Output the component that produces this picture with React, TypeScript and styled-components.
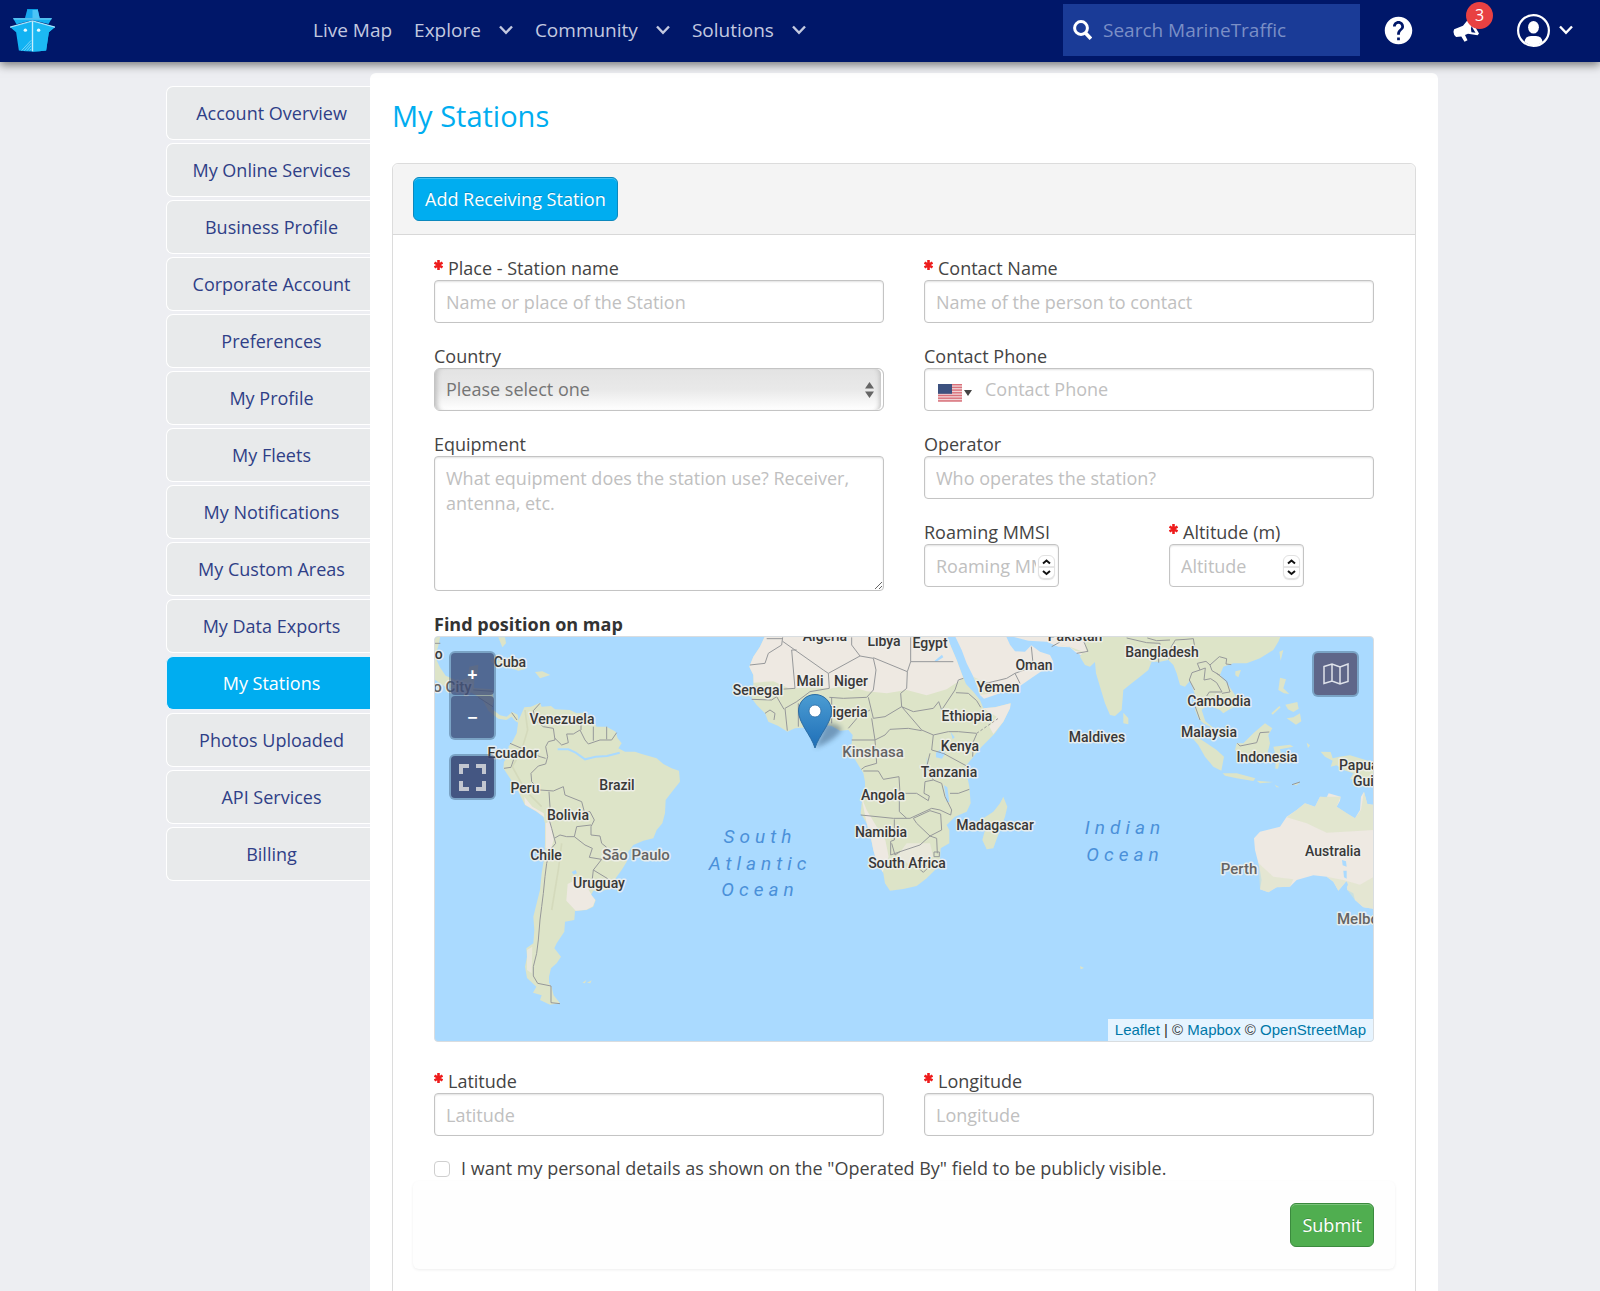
import React from "react";
import styled, { createGlobalStyle, css } from "styled-components";
import { MdHelp } from "react-icons/md";

const GlobalStyle = createGlobalStyle`
  *, *::before, *::after { box-sizing: border-box; }
  body {
    margin: 0;
    background: #edeef2;
    color: #444;
    font: 18px/25px "Open Sans", "Noto Sans", sans-serif;
  }
  button, input, select, textarea { font: inherit; margin: 0; }
`;

/* ---------- top bar ---------- */

const TopBar = styled.header`
  position: relative;
  z-index: 1;
  display: flex;
  align-items: center;
  height: 62px;
  padding: 0 26px 2px 10px;
  background: #001769;
  box-shadow: 0 3px 9px rgba(0, 0, 0, 0.5);
`;

const LogoLink = styled.a`
  display: flex;
  width: 46px;
  margin-right: 257px;
`;

const Nav = styled.nav`
  display: flex;
  gap: 22px;
  margin-right: auto;
  font-size: 19px;
`;

const NavLink = styled.a`
  color: #c3c9e0;
  text-decoration: none;
`;

const NavButton = styled.button`
  display: flex;
  align-items: center;
  gap: 18px;
  padding: 0;
  border: 0;
  background: none;
  color: #c3c9e0;
`;

const Search = styled.label`
  display: flex;
  align-items: center;
  gap: 11px;
  width: 297px;
  height: 52px;
  padding: 0 10px;
  background: #1a3b97;
  color: #fff;
`;

const SearchInput = styled.input`
  flex: 1;
  min-width: 0;
  padding: 0;
  border: 0;
  outline: 0;
  background: none;
  color: #fff;
  font-size: 19px;
  &::placeholder { color: #7b8fc6; opacity: 1; }
`;

const BarButton = styled.button<{ $gap: number }>`
  position: relative;
  display: flex;
  align-items: center;
  gap: 8px;
  margin-left: ${(p) => p.$gap}px;
  padding: 0;
  border: 0;
  background: none;
  color: #fff;
`;

const Badge = styled.span`
  position: absolute;
  top: -17px;
  right: -14px;
  width: 27px;
  height: 27px;
  border-radius: 50%;
  background: #e84142;
  font-size: 16px;
  line-height: 27px;
  text-align: center;
`;

/* ---------- page frame ---------- */

const Page = styled.div`
  display: flex;
  align-items: flex-start;
  max-width: 1276px;
  margin: 11px auto 0;
  padding-left: 4px;
`;

const SideNav = styled.nav`
  display: flex;
  flex-direction: column;
  gap: 3px;
  flex: 0 0 204px;
  padding-top: 13px;
`;

const SideLink = styled.a<{ $active?: boolean }>`
  height: 54px;
  padding-left: 6px;
  border: 1px solid #fff;
  border-right: 0;
  border-radius: 7px 0 0 7px;
  background: #e8eaeb;
  color: #2f3f87;
  line-height: 52px;
  text-align: center;
  text-decoration: none;
  ${(p) => p.$active && css`
    border-color: #e3f2fb;
    background: #00adf0;
    color: #fff;
  `}
`;

const Card = styled.main`
  flex: 1;
  min-width: 0;
  padding: 22px;
  border-radius: 6px 6px 0 0;
  background: #fff;
`;

const Title = styled.h1`
  margin: 0 0 27px;
  color: #00adf0;
  font-size: 29px;
  font-weight: 400;
  line-height: 41px;
`;

const Panel = styled.section`
  border: 1px solid #dcdcdc;
  border-radius: 6px;
`;

const PanelHead = styled.div`
  padding: 13px 20px;
  border-bottom: 1px solid #d8d8d8;
  border-radius: 6px 6px 0 0;
  background: #f4f4f4;
`;

const Button = styled.button<{ $tone: "blue" | "green" }>`
  display: block;
  height: 44px;
  padding: 0 11px;
  border: 1px solid ${(p) => (p.$tone === "blue" ? "#0c88bd" : "#3b8a3e")};
  border-radius: 6px;
  background: ${(p) => (p.$tone === "blue" ? "#00adf0" : "#50ae50")};
  box-shadow: inset 0 1px 0 rgba(255, 255, 255, 0.25);
  color: #fff;
  text-shadow: 0 -1px 0 rgba(0, 0, 0, 0.2);
`;

const Form = styled.form`
  padding: 20px 20px 42px;
`;

const FormBody = styled.div`
  padding: 0 21px;
`;

const Columns = styled.div`
  display: grid;
  grid-template-columns: 1fr 1fr;
  column-gap: 40px;
`;

const Column = styled.div`
  display: flex;
  flex-direction: column;
  gap: 20px;
`;

const Label = styled.label`
  display: flex;
  gap: 5px;
  height: 25px;
  padding-top: 1px;
  white-space: nowrap;
`;

const RequiredMark = styled.svg`
  flex: none;
  margin-top: 4px;
`;

const fieldBox = css`
  width: 100%;
  border: 1px solid #c4c4c4;
  border-radius: 4px;
  background: #fff;
  box-shadow: inset 0 1px 2px rgba(0, 0, 0, 0.12);
`;

const fieldText = css`
  color: #444;
  &::placeholder { color: #c0c0c0; opacity: 1; }
`;

const Input = styled.input`
  ${fieldBox}
  ${fieldText}
  display: block;
  height: 43px;
  padding: 0 11px;
`;

const TextArea = styled.textarea`
  ${fieldBox}
  ${fieldText}
  display: block;
  height: 135px;
  padding: 9px 11px;
  resize: vertical;
`;

const SelectWrap = styled.div`
  position: relative;
`;

const Select = styled.select`
  display: block;
  width: 100%;
  height: 43px;
  padding: 0 11px;
  appearance: none;
  border: 1px solid #c4c4c4;
  border-radius: 6px;
  background: linear-gradient(#e3e3e3, #e9e9e9 50%, #fff);
  box-shadow: inset 6px 0 5px -4px #bdbdbd, inset -2px 0 0 #fff, inset -7px 0 5px -4px #b8b8b8;
  color: #757575;
`;

const SelectArrows = styled.svg`
  position: absolute;
  top: 14px;
  right: 10px;
  pointer-events: none;
`;

const PhoneBox = styled.div`
  ${fieldBox}
  display: flex;
  height: 43px;
`;

const FlagButton = styled.button`
  display: flex;
  align-items: center;
  gap: 2px;
  width: 60px;
  padding: 6px 0 0 13px;
  border: 0;
  background: none;
`;

const PhoneInput = styled.input`
  ${fieldText}
  flex: 1;
  min-width: 0;
  padding: 0;
  border: 0;
  outline: 0;
  background: none;
`;

const NumberWrap = styled.div`
  position: relative;
  width: 135px;
`;

const NumberInput = styled(Input)`
  padding-right: 22px;
  appearance: textfield;
  &::-webkit-inner-spin-button { display: none; }
`;

const Spinner = styled.span`
  position: absolute;
  top: 11px;
  right: 4px;
  display: flex;
  width: 17px;
  height: 24px;
  border: 1px solid #e2e2e2;
  border-radius: 6px;
  background: #fff;
  box-shadow: 0 1px 1px rgba(0, 0, 0, 0.12);
  pointer-events: none;
`;

/* ---------- map ---------- */

const MapTitle = styled.h2`
  height: 25px;
  margin: 20px 0 0;
  padding-top: 1px;
  color: #333;
  font-size: 18px;
  font-weight: 700;
  line-height: 25px;
`;

const MapBox = styled.div`
  position: relative;
  height: 406px;
  margin-bottom: 26px;
  border: 1px solid #d9dde0;
  border-radius: 4px;
  background: #aadaff;
  overflow: hidden;
`;

const MapSvg = styled.svg`
  display: block;
  width: 100%;
  height: 100%;
  font-family: Roboto, "Open Sans", sans-serif;
`;

const Place = styled.text<{ $city?: boolean }>`
  fill: ${(p) => (p.$city ? "#646464" : "#383838")};
  font-size: ${(p) => (p.$city ? 15 : 14)}px;
  font-weight: 500;
  paint-order: stroke;
  stroke: rgba(240, 240, 236, 0.85);
  stroke-width: 3px;
  stroke-linejoin: round;
`;

const Ocean = styled.text`
  fill: #4a90d9;
  font-size: 19px;
  font-style: italic;
  letter-spacing: 5px;
  text-anchor: middle;
`;

const MapControls = styled.div<{ $side: "left" | "right" }>`
  position: absolute;
  top: 14px;
  ${(p) => p.$side}: 14px;
  display: flex;
  flex-direction: column;
  gap: 14px;
`;

const ControlGroup = styled.div`
  display: flex;
  flex-direction: column;
  gap: 1px;
  padding: 2px;
  border-radius: 6px;
  background: rgba(50, 80, 110, 0.4);
`;

const ControlButton = styled.button<{ $tone: "clear" | "solid" | "gray" }>`
  display: flex;
  align-items: center;
  justify-content: center;
  width: 43px;
  height: 42px;
  padding: 0;
  border: 0;
  border-radius: 4px;
  background: ${(p) =>
    ({ clear: "rgba(60, 74, 120, 0.65)", solid: "rgba(55, 66, 112, 0.8)", gray: "rgba(90, 92, 126, 0.85)" })[p.$tone]};
  color: #fff;
  font-size: 18px;
  font-weight: 700;
`;

const Attribution = styled.div`
  position: absolute;
  right: 0;
  bottom: 0;
  padding: 0 7px;
  background: rgba(255, 255, 255, 0.7);
  color: #333;
  font: 15px/22px "Liberation Sans", Arial, sans-serif;
  a { color: #0078a8; text-decoration: none; }
`;

/* ---------- form end ---------- */

const Consent = styled.label`
  display: flex;
  align-items: center;
  gap: 11px;
  margin-top: 20px;
`;

const Checkbox = styled.input`
  flex: none;
  width: 16px;
  height: 16px;
  appearance: none;
  border: 1px solid #cfcfcf;
  border-radius: 4px;
  background: #fff;
  &:checked { background: #00adf0; }
`;

const FormFooter = styled.div`
  display: flex;
  justify-content: flex-end;
  padding: 22px 21px;
  border-radius: 6px;
  background: #fefefe;
  box-shadow: 0 1px 3px rgba(0, 0, 0, 0.07);
`;

/* ---------- drawings ---------- */

const Logo = () => (
  <svg width="45" height="43" viewBox="0 0 132 126" role="img" aria-label="MarineTraffic">
    <path d="M51 0h30l6 26H44z" fill="#18a8ee" />
    <path d="M66 0h15l6 26H66z" fill="#4cc5f7" />
    <path d="M51 0h30l1 3H50z" fill="#0a9be0" />
    <path d="M9 27h114l-10 17L66 33 19 45z" fill="#14b0f0" />
    <path d="M9 27h114l-2 4H11z" fill="#6fd0f7" />
    <path d="M0 53 66 35l66 18-18 15-8 54q-40 5-80 0l-8-54z" fill="#12b2f2" />
    <path d="M66 35l66 18-18 15-8 54q-20 3-40 3z" fill="#1cb9f3" />
    <path d="M0 53 66 35l66 18" fill="none" stroke="#a9e4fb" strokeWidth="3.5" />
    <path d="M66 36v88" stroke="#c9effd" strokeWidth="4" />
    <path d="M34 122l28-30M42 122l20-22M50 122l12-14M58 122l4-5" stroke="#a9e4fb" strokeWidth="2" />
    <circle cx="45" cy="62" r="5" fill="#eafaff" />
    <circle cx="84" cy="62" r="5" fill="#eafaff" />
  </svg>
);

const Chevron = ({ width = 14 }: { width?: number }) => (
  <svg width={width} height="10" viewBox="0 0 14 10" fill="none" stroke="currentColor" strokeWidth="2.4" aria-hidden="true">
    <path d="M1 1.5 7 7.8 13 1.5" />
  </svg>
);

const SearchIcon = () => (
  <svg width="19" height="20" viewBox="0 0 19 20" fill="none" stroke="#fff" strokeWidth="3" aria-hidden="true">
    <circle cx="8" cy="8" r="6.4" />
    <path d="m12.3 12.8 5.6 6" strokeWidth="3.6" />
  </svg>
);

const Megaphone = () => (
  <svg width="26" height="23" viewBox="0 0 26 23" fill="#fff" aria-hidden="true">
    <path d="M1.2 10.2 10 6.8 15.5 0l2.7 1 7.8 13.6-1.4 1.7-9.6-1.5-3 1.2 2.5 5.2-3 1.6-3.2-5.2-5.2.4q-4-3.5-1.9-7.8z" />
    <path d="M18.5 7 22.5 13.8l-4-.6q-1.2-3 0-6.200z" fill="#001769" />
  </svg>
);

const UserIcon = () => (
  <svg width="33" height="33" viewBox="0 0 33 33" aria-hidden="true">
    <circle cx="16.5" cy="16.5" r="15.4" fill="none" stroke="#fff" strokeWidth="2.2" />
    <ellipse cx="16.5" cy="13.2" rx="5.4" ry="6.3" fill="#fff" />
    <path d="M7.5 28q.5-6 6.5-6h5q6 0 6.5 6Q17 35 7.5 28z" fill="#fff" />
  </svg>
);

const Flag = () => (
  <svg width="24" height="18" viewBox="0 0 24 18" aria-hidden="true">
    <rect width="24" height="18" rx="1" fill="#f0d4d6" />
    {[0, 1, 2, 3, 4, 5, 6].map((i) => (
      <rect key={i} y={i * 2.7} width="24" height="1.4" fill="#d9707a" />
    ))}
    <rect width="14" height="9.8" fill="#3c517f" />
  </svg>
);

const Marker = () => (
  <g transform="translate(364 58)">
    <defs>
      <linearGradient id="pin" x1="0" y1="0" x2="0" y2="1">
        <stop offset="0" stopColor="#4b9cd2" />
        <stop offset="1" stopColor="#1f6fb8" />
      </linearGradient>
      <filter id="soft" x="-20%" y="-20%" width="140%" height="140%">
        <feGaussianBlur stdDeviation="2.5" />
      </filter>
    </defs>
    <path d="M17 54 28 29q12 0 16 6-6 11-27 19z" fill="#24415f" opacity=".42" filter="url(#soft)" />
    <path d="M17 54C13 41 .5 29 .5 17a16.5 16.5 0 0 1 33 0c0 12-12.5 24-16.5 37z" fill="url(#pin)" stroke="#2c6ca3" strokeWidth="1" />
    <circle cx="17" cy="17" r="6" fill="#fff" stroke="#2c6ca3" strokeWidth=".8" />
  </g>
);

const land = "#dde4c8";
const desert = "#eee9e2";
const sea = "#aadaff";

const Americas = () => (
  <g transform="translate(-9 -26) scale(.33333)">
    <g fill={land}>
      <path d="M24 78H46L40 108 30 140 45 172 62 197 100 214 128 204 133 170 160 164 158 190 148 206 147 234 202 238 206 272 200 296 225 316 245 320 262 306 278 314 282 340 270 332 260 320 244 330 220 326 190 302 172 268 140 248 100 240 60 230 24 205z" />
      <path d="M220 82H240L243 100 232 112z" />
      <path d="M196 148 232 152 260 162 304 176 280 182 250 172 200 158z" />
      <path d="M330 186 352 184 376 195 345 205z" />
      <path d="M280 332 298 292 318 290 345 278 350 290 378 288 390 298 435 300 455 310 475 308 480 325 505 335 515 350 545 350 572 365 578 385 590 400 580 415 600 425 630 425 650 432 695 445 715 462 740 475 762 482 765 515 745 540 722 570 720 610 712 640 695 660 685 685 655 692 625 705 610 725 605 755 590 780 575 800 555 835 530 844 505 842 498 855 512 870 505 890 485 900 450 903 448 930 420 935 418 965 405 985 395 1000 388 1015 408 1040 395 1060 378 1075 372 1100 372 1118 380 1132 386 1156 405 1180 375 1184 345 1170 350 1156 324 1148 334 1130 306 1104 300 1070 306 1040 304 1015 325 1000 328 960 325 920 335 880 345 840 350 790 358 740 360 700 360 640 355 620 335 605 300 585 280 545 255 505 235 475 237 455 258 430 250 410 262 395 275 370z" />
      <path d="M472 1118 484 1110 480 1120zM486 1118 500 1111 496 1120z" />
    </g>
    <g fill={desert}>
      <path d="M362 640 376 632 386 690 376 722 362 714z" />
      <path d="M428 822 470 800 500 856 511 870 504 889 484 899 452 902 424 872z" />
      <path d="M298 560 322 590 356 610 358 622 334 604 300 584z" />
      <path d="M306 1020 322 1010 320 1090 306 1080z" opacity=".7" />
    </g>
    <path d="M398 418 430 418 452 428 480 448 512 440 546 438 584 428" fill="none" stroke={sea} strokeWidth="6" />
    <path d="M440 786l12-6 4 10-10 4z" fill={sea} />
    <g fill="none" stroke="#96989a" strokeWidth="3">
      <path d="M345 280 325 302 330 330 355 350 385 355 390 390 370 395 362 410 368 440 362 462 340 468 318 490 320 515 345 540 385 543 415 530 420 555 470 575 478 605 495 605 508 630 498 650 498 675 525 678 530 700 545 712" />
      <path d="M255 400 290 415 345 440 362 445M237 475 258 472 266 448" />
      <path d="M372 545 375 590 370 620 380 655 388 685 405 675 425 680 448 680 455 650 498 645M448 680 480 705 502 715 493 742 530 748 505 780 548 806 560 822M505 780 502 806" />
      <path d="M388 685 392 700 375 720 365 760 360 800 355 850 350 890 345 930 340 990 335 1030 325 1070 325 1098 338 1120 378 1128 378 1178 405 1181" />
      <path d="M390 385 410 405 430 398 425 372 445 372 465 360 480 390 490 402 525 390 560 390 575 368M505 350V392M545 350V388M468 330V360" />
      <path d="M30 100H46M145 240 204 244M160 262 204 290M260 308 276 330" />
    </g>
    <path d="M300 300 308 360 290 420 262 470 300 540 350 590M410 700 400 780 380 900" fill="none" stroke="#cfd4b4" strokeWidth="5" opacity=".6" />
  </g>
);

const AfricaArabia = () => (
  <g transform="translate(266 -26) scale(.33333)">
    <path d="M195 78 180 110 160 140 148 170 160 195 160 220 158 250 155 265 170 285 195 310 205 335 235 348 262 365 285 355 345 350 370 345 395 348 420 362 445 360 458 375 455 400 450 415 460 440 475 465 490 490 495 515 495 545 485 580 482 610 500 640 512 680 520 720 530 755 550 790 555 820 570 842 610 837 650 828 680 805 705 780 720 750 722 715 748 700 748 660 740 645 765 620 800 605 812 580 808 530 800 490 800 465 820 440 845 410 885 370 910 335 930 295 932 280 885 292 850 295 840 270 820 245 798 222 785 190 770 150 755 115 740 78z" fill={land} />
    <g fill={desert}>
      <path d="M195 78 180 110 160 140 148 170 160 195 161 218 220 214 270 236 330 232 390 236 440 226 500 244 560 250 620 240 680 256 740 238 790 205 770 150 755 115 740 78z" />
      <path d="M850 295 885 292 932 280 930 295 910 335 880 372 868 350 890 320z" />
      <path d="M484 560 500 640 512 680 520 720 530 755 548 786 566 740 556 690 530 650 500 600z" />
      <path d="M590 740 620 700 690 700 700 740 640 770z" opacity=".7" />
    </g>
    <path d="M765 78 785 120 800 160 825 210 840 255 852 266 900 250 960 228 1000 200 1030 180 1060 155 1050 135 1020 125 994 106 975 125 945 124 930 104 918 78z" fill={desert} />
    <path d="M820 200 842 254 900 248 940 226 870 224z" fill={land} opacity=".8" />
    <path d="M930 78 985 92 1040 95 1075 110 1110 112 1125 125 1150 140V78z" fill={desert} />
    <path d="M910 560 922 590 915 620 900 660 880 715 860 718 847 690 855 660 850 625 880 605 900 580z" fill={land} />
    <g fill={sea}>
      <path d="M708 428 722 418 736 430 726 446 708 442zM732 526l10 6 6 44-8 0zM680 440l6 30-6 0zM752 366l12 16-6 6zM704 152l22-18 4 8-22 14z" />
    </g>
    <g fill="none" stroke="#96989a" strokeWidth="3">
      <path d="M150 165 195 160 205 130 245 105 248 82M200 86H246M248 94 370 180 385 190 480 138 455 105 455 82" />
      <path d="M290 120 275 120 285 235 210 240 160 230M385 190 388 235 330 245 290 275 255 295 262 362M155 268 215 270 230 260 252 298M195 310 210 300 225 310 222 330M295 280V350" />
      <path d="M388 262 430 265 500 262 520 240 528 180 520 145 480 138M520 143 622 185 632 155 632 82M632 155H760" />
      <path d="M622 185 620 235 602 250 605 290 555 320 520 325 505 262M605 290 640 305 700 295 716 275 725 300 765 240 775 210 790 205" />
      <path d="M605 290 665 360 700 375 745 365 775 365 830 370M768 248 805 250 830 272 842 292M395 262V340M445 355 475 320 510 300M515 325 525 390 555 375 570 358 625 355 665 362" />
      <path d="M830 370 895 325" strokeDasharray="8 6" />
      <path d="M455 390H525L530 460 495 470 484 478M490 483H535L550 508 597 500 600 550 650 550 685 572 688 558 672 550 675 515 700 510" />
      <path d="M482 615 580 625 630 625 695 595 720 600 752 615 755 600 735 560 725 520 700 510M598 550V605L620 625M583 628V690L572 694V735M572 735 600 725 660 705 690 678 650 640 640 625 690 602 722 612 725 660 690 678 710 685 712 730" />
      <path d="M575 700 585 735 600 725M656 775l16-12 12 10-14 14zM702 726h16v14h-16z" />
      <path d="M750 550H775L808 538M830 372 820 395 818 440M700 375 695 420 730 430 800 468M690 430 680 470 700 510" />
      <path d="M850 222 920 205 945 190 1000 170 994 110M945 190 960 220M1055 110 1080 96" />
    </g>
  </g>
);

const AsiaOceania = () => (
  <g transform="translate(626 -26) scale(.33333)">
    <g fill={land}>
      <path d="M0 78V105L30 110 45 122 68 126 60 140 75 165 90 170 105 156 108 190 120 230 135 280 150 315 165 318 185 300 190 240 215 220 240 200 265 180 275 155 300 155 325 150 340 165 350 190 360 225 375 230 390 212 400 240 410 270 405 300 415 325 430 340 450 350 452 362 465 375 458 352 436 334 425 300 440 285 455 290 480 300 490 310 505 300 525 290 525 255 505 225 480 195 490 170 520 160 560 160 600 145 640 120 655 95 662 78z" />
      <path d="M190 308 205 325 205 343 190 340zM385 370 410 380 440 400 470 420 492 440 484 482 460 470 435 440 415 405zM488 490 530 490 586 505 580 513 530 505 495 497z" />
      <path d="M530 400 550 400 580 370 615 340 637 355 625 375 630 400 620 440 590 450 545 440 525 420z" />
      <path d="M640 410 690 404 700 410 660 418 664 438 690 430 676 446 660 450 654 476 646 476 648 440z" />
      <path d="M660 203 678 208 670 235 688 252 672 250 655 240zM680 325 700 322 720 310 724 334 708 344zM676 284 712 276 716 296 700 306 684 298zM634 310l24-22 4 4-24 22zM526 184 543 180 535 202 526 196zM658 125 670 120 662 152zM740 398l10 8-6 8z" />
      <path d="M782 425 812 426 818 445 838 440 870 436 900 445 942 458V518L910 508 870 508 880 490 850 480 830 466 812 470 818 452 795 440z" />
      <path d="M644 524 658 532 650 532zM700 524 720 516 710 526zM590 512 640 516 600 520z" />
    </g>
    <path d="M0 78V105L30 110 80 130 70 78z" fill={desert} />
    <path d="M582 685 600 665 660 650 680 620 710 600 735 580 765 590 780 560 800 562 806 550 842 560 840 572 830 590 860 610 885 625 900 600 903 560 912 545 922 582 942 585V897L910 892 885 870 880 850 862 840 858 815 835 842 820 815 800 800 760 796 710 810 690 830 650 832 625 847 600 838 605 810 598 770 585 720z" fill={desert} />
    <path d="M680 622 710 600 735 580 765 590 780 560 842 560 830 590 885 625 903 600 912 545 922 582 942 585V660L880 664 800 668 740 640z" fill={land} opacity=".7" />
    <path d="M596 760 640 800 700 808 690 830 650 832 625 847 600 838zM800 800 850 810 900 824 942 800V897L910 892 885 870 862 840 858 815 835 842 820 815z" fill={land} opacity=".6" />
    <path d="M846 750l12 4 2 16-12-4zM850 782l10 0 0 24-8-4zM848 830l12-16 4 10-10 18z" fill={sea} />
    <path d="M60 1068 72 1074 62 1078z" fill={land} />
    <g fill="none" stroke="#96989a" strokeWidth="3">
      <path d="M50 130 84 124 72 96 90 82M200 84 260 98 300 100 300 118M262 84 290 92 330 90M296 120V158M334 110 326 148M334 110 346 90 378 88 400 86 404 110 392 120 412 140" />
      <path d="M412 160 420 180 396 188 388 210 404 240M412 160 438 154 450 165 478 140 500 146 498 162 514 164M420 180 436 174 432 210 452 206 470 218 486 246 448 246 440 258M470 190 500 214 510 246 486 250M450 165 456 182 480 196M406 290 420 330" />
      <path d="M532 400 540 408 590 398 600 368 628 366M696 524 720 516" />
    </g>
  </g>
);

type PlaceMark = [string, number, number, ("city" | "start" | "cityStart")?];

const places: PlaceMark[] = [
  ["Cuba", 76, 31], ["Mexico", -37, 23, "start"], ["Mexico City", -41, 56, "cityStart"],
  ["Venezuela", 128, 88], ["Ecuador", 79, 122], ["Peru", 91, 157], ["Brazil", 183, 154],
  ["Bolivia", 134, 184], ["Chile", 112, 224], ["São Paulo", 202, 224, "city"], ["Uruguay", 165, 252],
  ["Algeria", 391, 5], ["Libya", 450, 10], ["Egypt", 496, 12], ["Oman", 600, 34], ["Yemen", 564, 56],
  ["Mali", 376, 50], ["Niger", 417, 50], ["Senegal", 324, 59], ["Nigeria", 411, 81],
  ["Ethiopia", 533, 85], ["Kinshasa", 439, 121, "city"], ["Kenya", 526, 115], ["Tanzania", 515, 141],
  ["Angola", 449, 164], ["Madagascar", 561, 194], ["Namibia", 447, 201], ["South Africa", 473, 232],
  ["Pakistan", 641, 5], ["Bangladesh", 728, 21], ["Cambodia", 785, 70], ["Maldives", 663, 106],
  ["Malaysia", 775, 101], ["Indonesia", 833, 126], ["Papua New", 905, 134, "start"],
  ["Guinea", 919, 150, "start"], ["Australia", 899, 220], ["Perth", 805, 238, "city"],
  ["Melbourne", 903, 288, "cityStart"],
];

const oceans: [string, number, number][] = [
  ["South", 326, 207], ["Atlantic", 326, 234], ["Ocean", 326, 260],
  ["Indian", 691, 198], ["Ocean", 691, 225],
];

const WorldMap = () => (
  <MapSvg viewBox="0 1 940 404" preserveAspectRatio="xMidYMid slice" role="img" aria-label="World map">
    <Americas />
    <AfricaArabia />
    <AsiaOceania />
    {oceans.map(([name, x, y]) => (
      <Ocean key={name + x + y} x={x} y={y}>{name}</Ocean>
    ))}
    {places.map(([name, x, y, kind]) => (
      <Place
        key={name}
        x={x}
        y={y}
        $city={kind === "city" || kind === "cityStart"}
        textAnchor={kind === "start" || kind === "cityStart" ? "start" : "middle"}
      >
        {name}
      </Place>
    ))}
    <Marker />
  </MapSvg>
);

/* ---------- form parts ---------- */

const Required = () => (
  <RequiredMark width="9" height="10" viewBox="0 0 9 10" stroke="#ee1c1c" strokeWidth="2.6" aria-hidden="true">
    <path d="M4.5 0v10M.5 2.5l8 5M8.5 2.5l-8 5" />
  </RequiredMark>
);

type FieldProps = { id: string; label: string; required?: boolean; children: React.ReactNode };

const Field = ({ id, label, required, children }: FieldProps) => (
  <div>
    <Label htmlFor={id}>
      {required && <Required />}
      {label}
    </Label>
    {children}
  </div>
);

const NumberBox = ({ id, placeholder }: { id: string; placeholder: string }) => (
  <NumberWrap>
    <NumberInput id={id} type="number" placeholder={placeholder} />
    <Spinner aria-hidden="true">
      <svg width="15" height="22" viewBox="0 0 15 22" fill="none" stroke="#111" strokeWidth="2">
        <path d="M0 11h15" stroke="#ccc" strokeWidth="1" />
        <path d="M4 7.5 7.5 4.5 11 7.5M4 15 7.5 18 11 15" />
      </svg>
    </Spinner>
  </NumberWrap>
);

const sections = [
  "Account Overview", "My Online Services", "Business Profile", "Corporate Account", "Preferences",
  "My Profile", "My Fleets", "My Notifications", "My Custom Areas", "My Data Exports", "My Stations",
  "Photos Uploaded", "API Services", "Billing",
];

export default function App() {
  return (
    <>
      <GlobalStyle />
      <TopBar>
        <LogoLink href="#"><Logo /></LogoLink>
        <Nav>
          <NavLink href="#">Live Map</NavLink>
          {["Explore", "Community", "Solutions"].map((name) => (
            <NavButton key={name} type="button">{name}<Chevron /></NavButton>
          ))}
        </Nav>
        <Search>
          <SearchIcon />
          <SearchInput type="search" aria-label="Search" placeholder="Search MarineTraffic" />
        </Search>
        <BarButton type="button" $gap={22} aria-label="Help"><MdHelp size={33} /></BarButton>
        <BarButton type="button" $gap={38} aria-label="News">
          <Megaphone />
          <Badge>3</Badge>
        </BarButton>
        <BarButton type="button" $gap={38} aria-label="Account">
          <UserIcon />
          <Chevron width={16} />
        </BarButton>
      </TopBar>

      <Page>
        <SideNav>
          {sections.map((name) => (
            <SideLink key={name} href="#" $active={name === "My Stations"}>{name}</SideLink>
          ))}
        </SideNav>

        <Card>
          <Title>My Stations</Title>
          <Panel>
            <PanelHead>
              <Button type="button" $tone="blue">Add Receiving Station</Button>
            </PanelHead>
            <Form onSubmit={(e) => e.preventDefault()}>
              <FormBody>
                <Columns>
                  <Column>
                    <Field id="place" label="Place - Station name" required>
                      <Input id="place" placeholder="Name or place of the Station" />
                    </Field>
                    <Field id="country" label="Country">
                      <SelectWrap>
                        <Select id="country"><option>Please select one</option></Select>
                        <SelectArrows width="9" height="16" viewBox="0 0 9 16" fill="#666" aria-hidden="true">
                          <path d="M4.5 0 9 6.5H0zM4.5 16 9 9.5H0z" />
                        </SelectArrows>
                      </SelectWrap>
                    </Field>
                    <Field id="equipment" label="Equipment">
                      <TextArea id="equipment" placeholder="What equipment does the station use? Receiver, antenna, etc." />
                    </Field>
                  </Column>
                  <Column>
                    <Field id="contact" label="Contact Name" required>
                      <Input id="contact" placeholder="Name of the person to contact" />
                    </Field>
                    <Field id="phone" label="Contact Phone">
                      <PhoneBox>
                        <FlagButton type="button" aria-label="Country code">
                          <Flag />
                          <svg width="8" height="6" viewBox="0 0 8 6" fill="#444" aria-hidden="true"><path d="M0 0h8L4 6z" /></svg>
                        </FlagButton>
                        <PhoneInput id="phone" type="tel" placeholder="Contact Phone" />
                      </PhoneBox>
                    </Field>
                    <Field id="operator" label="Operator">
                      <Input id="operator" placeholder="Who operates the station?" />
                    </Field>
                    <Columns>
                      <Field id="mmsi" label="Roaming MMSI">
                        <NumberBox id="mmsi" placeholder="Roaming MMSI" />
                      </Field>
                      <Field id="altitude" label="Altitude (m)" required>
                        <NumberBox id="altitude" placeholder="Altitude" />
                      </Field>
                    </Columns>
                  </Column>
                </Columns>

                <MapTitle>Find position on map</MapTitle>
                <MapBox>
                  <WorldMap />
                  <MapControls $side="left">
                    <ControlGroup>
                      <ControlButton type="button" $tone="clear" aria-label="Zoom in">+</ControlButton>
                      <ControlButton type="button" $tone="clear" aria-label="Zoom out">−</ControlButton>
                    </ControlGroup>
                    <ControlGroup>
                      <ControlButton type="button" $tone="solid" aria-label="Full screen">
                        <svg width="27" height="27" viewBox="0 0 27 27" fill="none" stroke="#c2c6d0" strokeWidth="4" aria-hidden="true">
                          <path d="M2 10V2h8M17 2h8v8M25 17v8h-8M10 25H2v-8" />
                        </svg>
                      </ControlButton>
                    </ControlGroup>
                  </MapControls>
                  <MapControls $side="right">
                    <ControlGroup>
                      <ControlButton type="button" $tone="gray" aria-label="Map layers">
                        <svg width="26" height="22" viewBox="0 0 26 22" fill="none" stroke="#dfe2ea" strokeWidth="1.5" aria-hidden="true">
                          <path d="M1 3.5 9 1l8 3 8-3v17.5L17 21l-8-3-8 2.5zM9 1v17M17 4v17" />
                        </svg>
                      </ControlButton>
                    </ControlGroup>
                  </MapControls>
                  <Attribution>
                    <a href="#">Leaflet</a> | © <a href="#">Mapbox</a> © <a href="#">OpenStreetMap</a>
                  </Attribution>
                </MapBox>

                <Columns>
                  <Field id="latitude" label="Latitude" required>
                    <Input id="latitude" placeholder="Latitude" />
                  </Field>
                  <Field id="longitude" label="Longitude" required>
                    <Input id="longitude" placeholder="Longitude" />
                  </Field>
                </Columns>
                <Consent>
                  <Checkbox type="checkbox" />
                  I want my personal details as shown on the "Operated By" field to be publicly visible.
                </Consent>
              </FormBody>
              <FormFooter>
                <Button type="submit" $tone="green">Submit</Button>
              </FormFooter>
            </Form>
          </Panel>
        </Card>
      </Page>
    </>
  );
}
